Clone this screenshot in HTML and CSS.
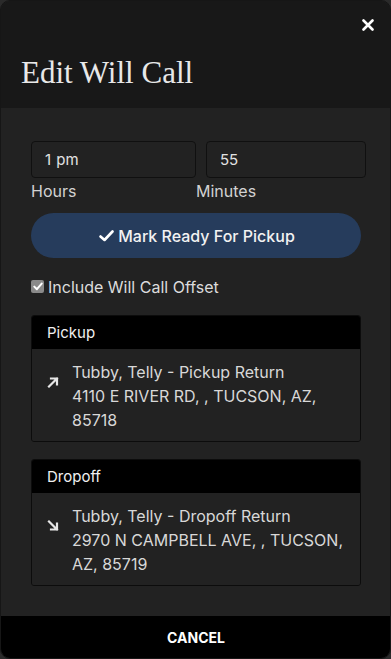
FILE: index.html
```html
<!DOCTYPE html>
<html lang="en">
<head>
<meta charset="utf-8">
<title>Edit Will Call</title>
<link rel="stylesheet" href="styles.css">
</head>
<body>
<div class="modal">
  <header class="modal-header">
    <div class="close-row">
      <button class="close-btn" aria-label="Close">
        <svg width="12" height="12" viewBox="0 0 12 12"><path d="M1.5 1.5 L10.5 10.5 M10.5 1.5 L1.5 10.5" stroke="#fff" stroke-width="2.6" stroke-linecap="round" fill="none"/></svg>
      </button>
    </div>
    <h1 class="title">Edit Will Call</h1>
  </header>
  <main class="modal-body">
    <div class="time-grid">
      <div class="field">
        <div class="input">1 pm</div>
        <label class="label">Hours</label>
      </div>
      <div class="field">
        <div class="input input-right">55</div>
        <label class="label">Minutes</label>
      </div>
    </div>
    <button class="ready-btn">
      <svg width="15" height="12" viewBox="0 0 15 12"><path d="M1.5 6.5 L5.5 10 L13.5 1.5" stroke="#fff" stroke-width="2.6" fill="none" stroke-linecap="round" stroke-linejoin="round"/></svg>
      <span>Mark Ready For Pickup</span>
    </button>
    <div class="check-row">
      <span class="checkbox">
        <svg width="10" height="9" viewBox="0 0 10 9"><path d="M1.3 4.6 L3.9 7.2 L8.7 1.6" stroke="#fff" stroke-width="2" fill="none" stroke-linecap="round" stroke-linejoin="round"/></svg>
      </span>
      <span class="check-label">Include Will Call Offset</span>
    </div>
    <section class="card">
      <div class="card-head">Pickup</div>
      <div class="card-body">
        <svg class="arrow" width="12" height="12" viewBox="0 0 12 12"><path d="M2 10.5 L10 2.5 M4 2.5 H10 V8.5" stroke="#e6e6e6" stroke-width="2.2" fill="none" stroke-linecap="square"/></svg>
        <div class="card-text">
          <div>Tubby, Telly - Pickup Return</div>
          <div>4110 E RIVER RD, , TUCSON, AZ, 85718</div>
        </div>
      </div>
    </section>
    <section class="card">
      <div class="card-head">Dropoff</div>
      <div class="card-body">
        <svg class="arrow" width="12" height="12" viewBox="0 0 12 12"><path d="M2 1.5 L10 9.5 M10 3.5 V9.5 H4" stroke="#e6e6e6" stroke-width="2.2" fill="none" stroke-linecap="square"/></svg>
        <div class="card-text">
          <div>Tubby, Telly - Dropoff Return</div>
          <div>2970 N CAMPBELL AVE, , TUCSON, AZ, 85719</div>
        </div>
      </div>
    </section>
  </main>
  <footer class="modal-footer">
    <button class="cancel-btn">CANCEL</button>
  </footer>
</div>
</body>
</html>
```

FILE: styles.css
```css
* { box-sizing: border-box; }
html, body {
  margin: 0;
  padding: 0;
  background: #2a2a2a;
}
body {
  font-family: Inter, "Noto Sans", sans-serif;
  color: #dcdcdc;
}
.modal {
  width: 391px;
  height: 659px;
  border: 1px solid #161616;
  border-radius: 10px;
  overflow: hidden;
  display: flex;
  flex-direction: column;
  background: #222222;
}
.modal-header {
  background: #181818;
  height: 107px;
  padding: 18px 16px 0 20px;
  display: flex;
  flex-direction: column;
}
.close-row {
  display: flex;
  justify-content: flex-end;
}
.close-btn {
  border: 0;
  background: none;
  padding: 0;
  width: 12px;
  height: 12px;
  display: block;
}
.close-btn svg { display: block; }
.title {
  margin: 24px 0 0 0;
  font-family: "Liberation Serif", "DejaVu Serif", serif;
  font-weight: normal;
  font-size: 31px;
  line-height: 36px;
  color: #e8e8e8;
}
.modal-body {
  flex: 1;
  padding: 33px 29px 0 30px;
  background: #222222;
}
.time-grid {
  display: grid;
  grid-template-columns: 165px 170px;
  margin-right: -5px;
}
.input {
  height: 37px;
  border: 1px solid #101010;
  border-radius: 4px;
  padding-left: 13px;
  font-size: 15px;
  line-height: 35px;
  color: #e2e2e2;
  word-spacing: 1px;
}
.input-right { margin-left: 10px; }
.label {
  display: block;
  margin-top: 1px;
  font-size: 16px;
  line-height: 24px;
  color: #d2d2d2;
}
.ready-btn {
  margin-top: 10px;
  width: 100%;
  height: 45px;
  border: 0;
  border-radius: 23px;
  background: #263c5c;
  color: #f2f2f2;
  font-family: Inter, "Noto Sans", sans-serif;
  font-size: 16px;
  font-weight: 500;
  display: flex;
  align-items: center;
  justify-content: center;
  gap: 4px;
  padding: 0 0 0 2px;
}
.ready-btn svg { display: block; }
.check-row {
  margin-top: 17px;
  display: flex;
  align-items: center;
  gap: 4px;
  height: 24px;
  font-size: 16px;
  color: #dcdcdc;
}
.checkbox {
  width: 13px;
  height: 13px;
  border-radius: 2px;
  background: #8a8a8a;
  display: flex;
  align-items: center;
  justify-content: center;
  margin-top: -1px;
}
.checkbox svg { display: block; }
.card {
  margin-top: 16px;
  border: 1px solid #0c0c0c;
  border-radius: 3px;
  overflow: hidden;
}
.card + .card { margin-top: 17px; }
.card-head {
  background: #000;
  height: 33px;
  padding: 5px 15px 0 15px;
  font-size: 15px;
  line-height: 24px;
  color: #f0f0f0;
}
.card-body {
  display: flex;
  align-items: flex-start;
  gap: 13px;
  padding: 11px 16px 9px 15px;
  background: #222222;
}
.arrow {
  flex: none;
  display: block;
  margin-top: 16px;
}
.card-text {
  font-size: 16px;
  line-height: 24px;
  color: #d8d8d8;
}
.modal-footer {
  height: 42px;
  background: #000;
  display: flex;
  align-items: center;
  justify-content: center;
}
.cancel-btn {
  border: 0;
  background: none;
  color: #fff;
  font-family: Inter, "Noto Sans", sans-serif;
  font-weight: 700;
  font-size: 14px;
  padding: 0;
  margin-left: 1px;
}
```
